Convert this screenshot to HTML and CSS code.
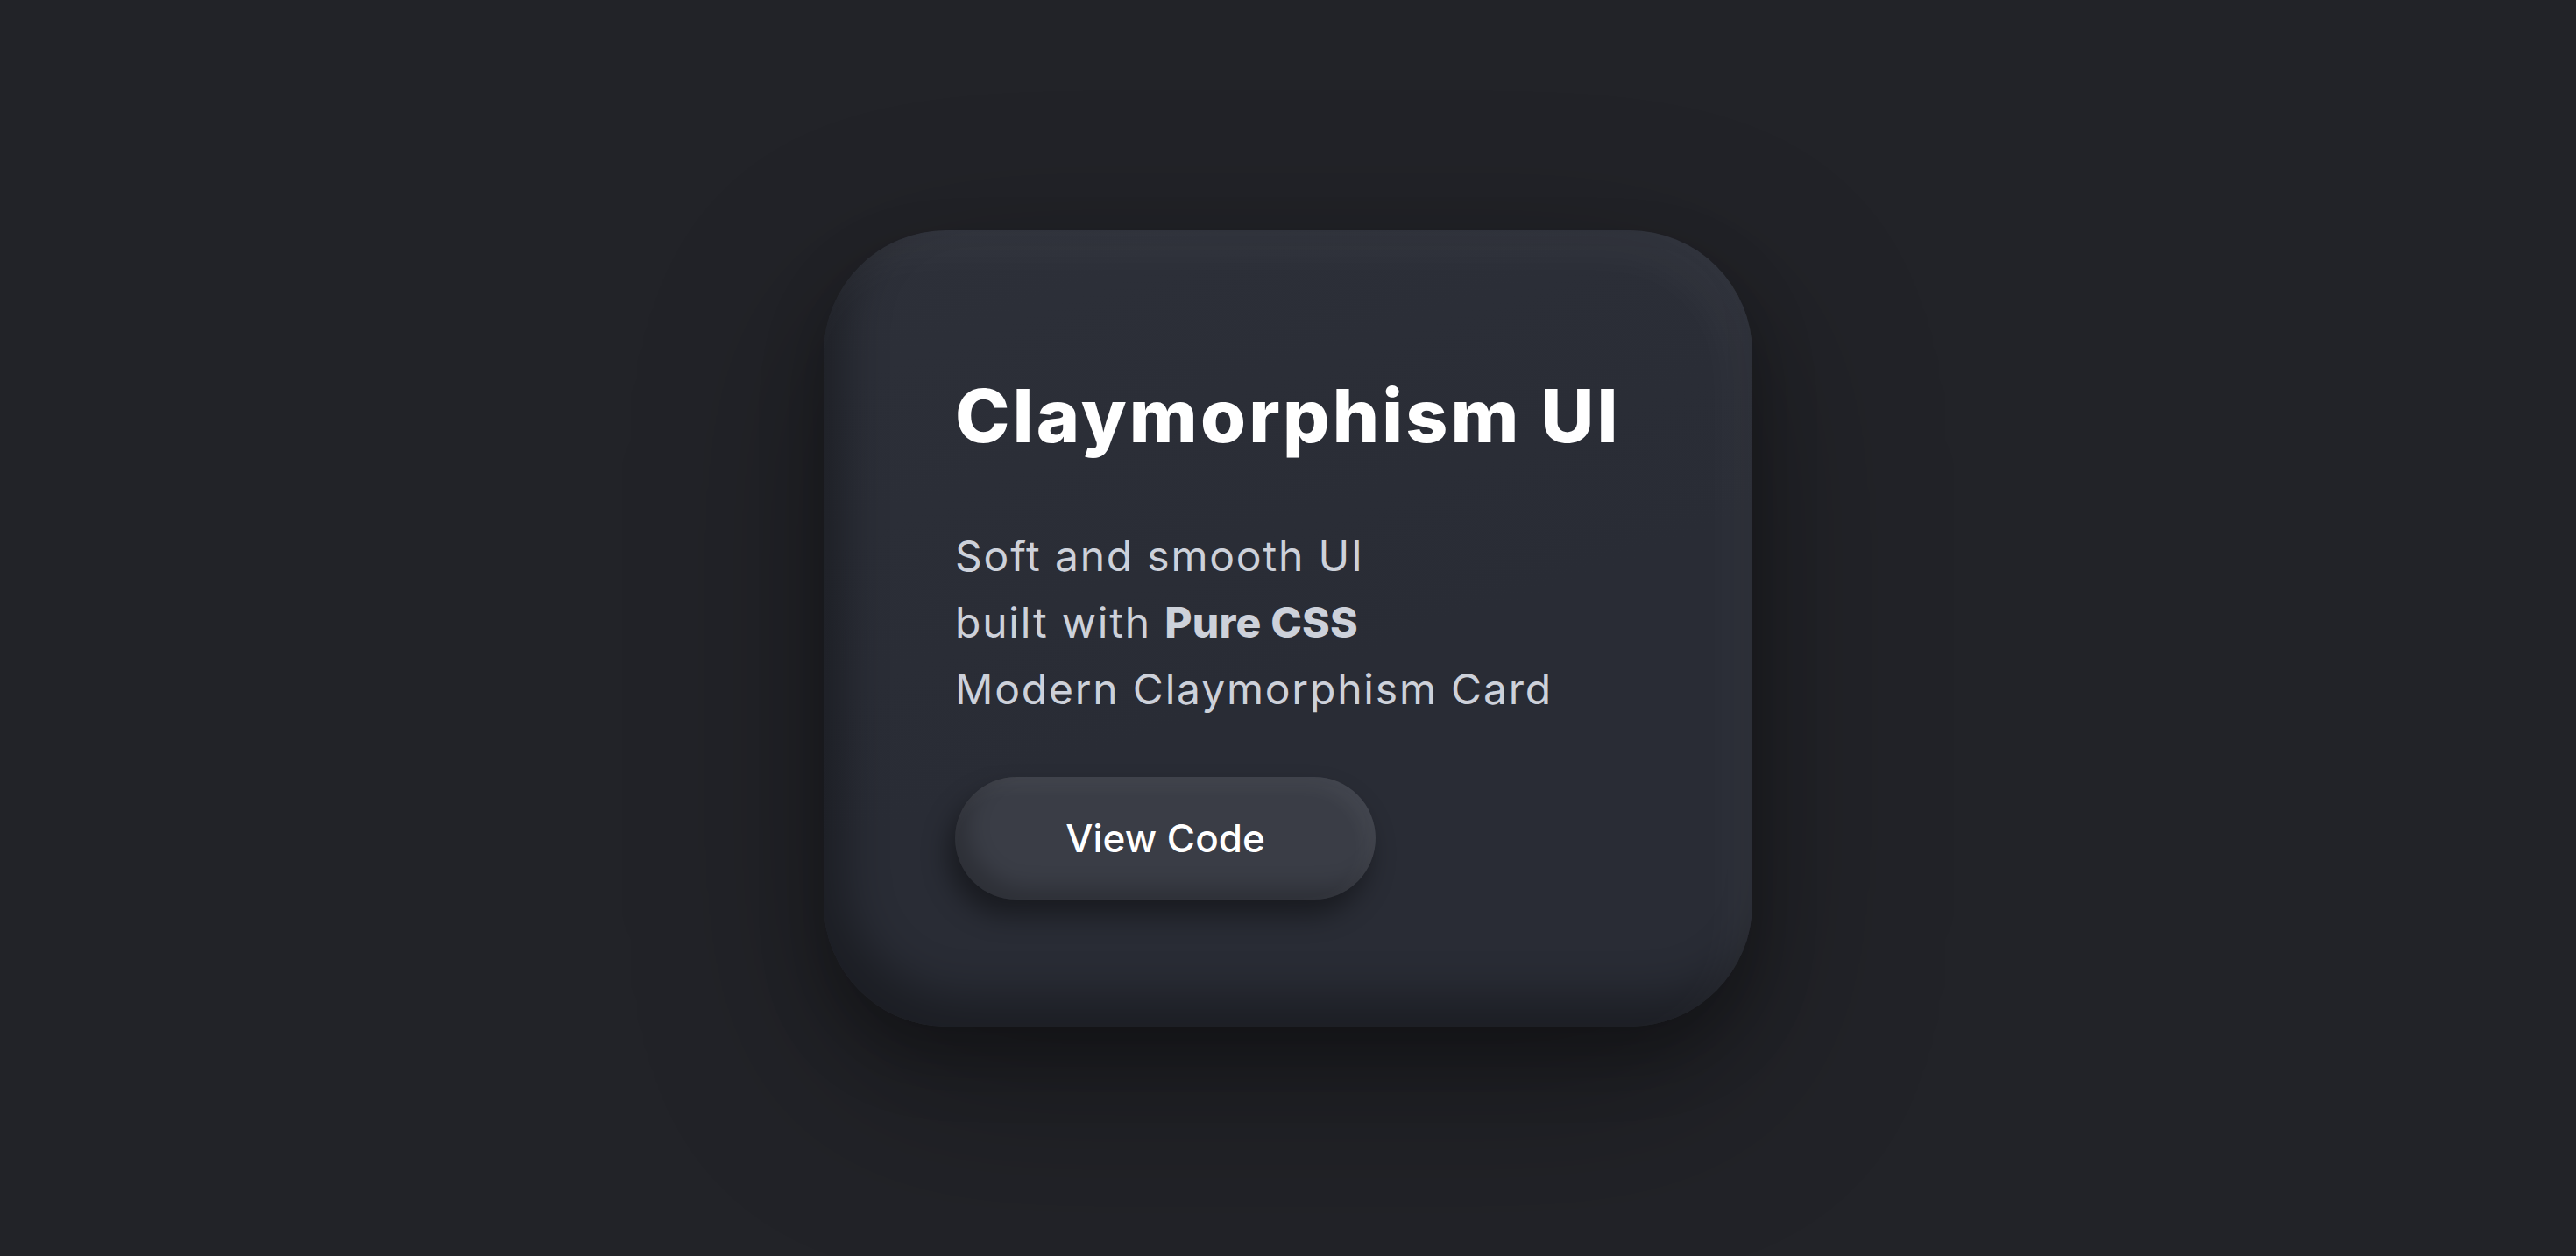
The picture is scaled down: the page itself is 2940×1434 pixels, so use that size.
FILE: index.html
```html
<!DOCTYPE html>
<html lang="en">
<head>
    <meta charset="UTF-8">
    <meta name="viewport" content="width=device-width, initial-scale=1.0">
    <title>Claymorphism UI</title>
    <link rel="stylesheet" href="styles.css">
</head>
<body>
    <div class="card">
        <h1 class="card-title">Claymorphism UI</h1>
        <p class="card-text">
            Soft and smooth UI<br>
            built with <strong>Pure CSS</strong><br>
            Modern Claymorphism Card
        </p>
        <button class="clay-btn" type="button">View Code</button>
    </div>
</body>
</html>
```

FILE: styles.css
```css
* {
    box-sizing: border-box;
}
body {
    margin: 0;
    min-height: 100vh;
    display: flex;
    align-items: center;
    justify-content: center;
    background: #222328;
    font-family: 'Inter', 'Noto Sans', sans-serif;
}
.card {
    width: 1060px;
    padding: 164px 150px 145px 150px;
    border-radius: 140px;
    background: linear-gradient(160deg, #2d3039 0%, #292c35 55%, #292c35 100%);
    box-shadow:
        inset -24px 26px 50px rgba(255, 255, 255, 0.035),
        inset 24px -34px 50px rgba(0, 0, 0, 0.32),
        0 36px 70px rgba(0, 0, 0, 0.28),
        0 70px 220px rgba(0, 0, 0, 0.3);
}
.card-title {
    margin: 0;
    font-size: 84px;
    line-height: 96px;
    font-weight: 800;
    color: #ffffff;
    letter-spacing: 3.2px;
}
.card-text {
    margin: 74px 0 62px 0;
    font-size: 48px;
    line-height: 76px;
    font-weight: 400;
    color: #cdd1da;
    letter-spacing: 1.8px;
}
.card-text strong {
    font-weight: 800;
    letter-spacing: 0.2px;
}
.clay-btn {
    display: block;
    width: 480px;
    height: 140px;
    padding: 0;
    border: none;
    border-radius: 70px;
    background: #3a3d46;
    color: #ffffff;
    font-family: inherit;
    font-size: 44px;
    line-height: 140px;
    font-weight: 500;
    cursor: pointer;
    box-shadow:
        inset -10px 10px 22px rgba(255, 255, 255, 0.05),
        inset 14px -14px 24px rgba(0, 0, 0, 0.22),
        -8px 18px 30px rgba(0, 0, 0, 0.4);
}
```
